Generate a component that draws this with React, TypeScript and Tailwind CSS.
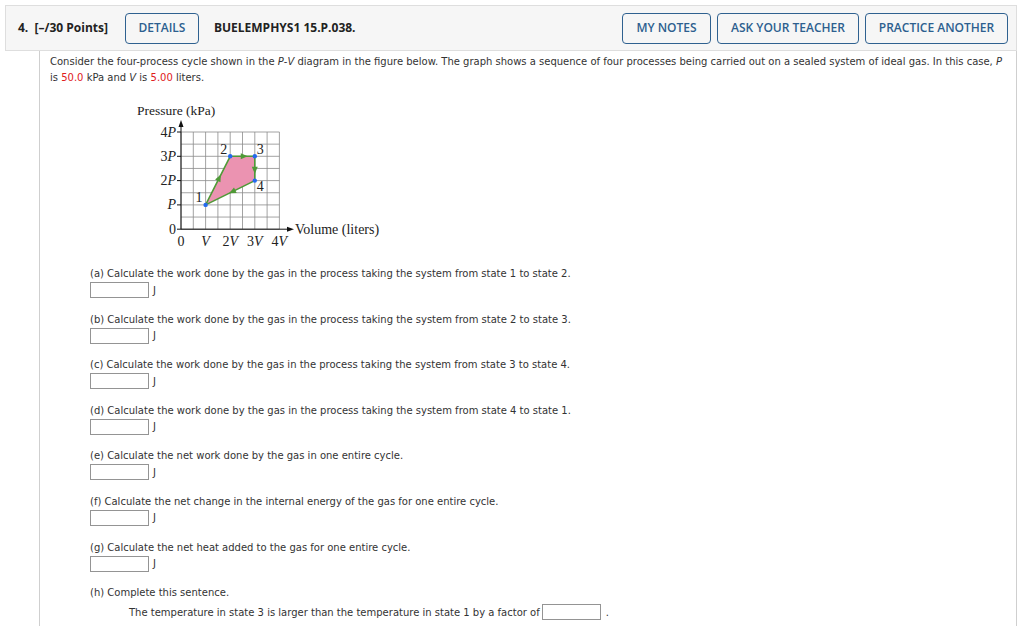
import React from 'react';

const body = { fontFamily: '"DejaVu Sans", Verdana, sans-serif' };
const head = { fontFamily: '"Open Sans", "Liberation Sans", sans-serif' };

function Btn({ label, w }: { label: string; w: string }) {
    return (
        <div
            className={`${w} h-[31px] flex items-center justify-center rounded-[4px] border border-[#2f6190] text-[#2d5f8f] text-[12px] font-semibold`}
        >
            {label}
        </div>
    );
}

function Box({ w = 'w-[59px]' }: { w?: string }) {
    return <span className={`inline-block ${w} h-[16px] border border-[#949494] bg-white align-middle`} />;
}

// P-V diagram
function Diagram() {
    const x0 = 51;
    const dx = 12.3;
    const y0 = 33;
    const dy = 12.15;
    const xs = Array.from({ length: 9 }, (_, i) => x0 + i * dx);
    const ys = Array.from({ length: 9 }, (_, j) => y0 + j * dy);
    const p1 = [x0 + 2 * dx, y0 + 6 * dy];
    const p2 = [x0 + 4 * dx, y0 + 2 * dy];
    const p3 = [x0 + 6 * dx, y0 + 2 * dy];
    const p4 = [x0 + 6 * dx, y0 + 4 * dy];
    const pts = [p1, p2, p3, p4];
    const green = '#4f9a37';

    const arrow = (a: number[], b: number[], t = 0.55) => {
        const mx = a[0] + (b[0] - a[0]) * t;
        const my = a[1] + (b[1] - a[1]) * t;
        const ang = (Math.atan2(b[1] - a[1], b[0] - a[0]) * 180) / Math.PI;
        return (
            <polygon
                key={`${mx}-${my}`}
                points="4,0 -3,-3 -3,3"
                fill={green}
                transform={`translate(${mx} ${my}) rotate(${ang})`}
            />
        );
    };

    const serif = { fontFamily: '"Liberation Serif", "Times New Roman", serif' };
    const yLabels = [
        { n: '4', y: ys[0] },
        { n: '3', y: ys[2] },
        { n: '2', y: ys[4] },
        { n: '', y: ys[6] },
    ];

    return (
        <svg width="260" height="156" viewBox="0 0 260 156" style={serif} className="block">
            <text x="7" y="16" fontSize="13.5" fill="#222">
                Pressure (kPa)
            </text>
            {xs.map((x) => (
                <line key={`v${x}`} x1={x} y1={y0} x2={x} y2={ys[8]} stroke="#8c8c8c" strokeWidth="0.8" />
            ))}
            {ys.map((y) => (
                <line key={`h${y}`} x1={x0} y1={y} x2={xs[8]} y2={y} stroke="#8c8c8c" strokeWidth="0.8" />
            ))}
            {/* axes */}
            <line x1={x0} y1={ys[8]} x2={x0} y2={25} stroke="#111" strokeWidth="1" />
            <polygon points={`${x0},21 ${x0 - 2.5},28 ${x0 + 2.5},28`} fill="#111" />
            <line x1={x0} y1={ys[8]} x2={160} y2={ys[8]} stroke="#111" strokeWidth="1" />
            <polygon points={`164,${ys[8]} 157,${ys[8] - 2.5} 157,${ys[8] + 2.5}`} fill="#111" />
            {[ys[0], ys[2], ys[4], ys[6], ys[8]].map((y) => (
                <line key={`t${y}`} x1={x0 - 4} y1={y} x2={x0} y2={y} stroke="#111" strokeWidth="1" />
            ))}
            {yLabels.map((l) => (
                <text key={l.y} x={x0 - 5} y={l.y + 4.5} fontSize="14" textAnchor="end" fill="#222">
                    {l.n}
                    <tspan fontStyle="italic">P</tspan>
                </text>
            ))}
            <text x={x0 - 5} y={ys[8] + 4.5} fontSize="14" textAnchor="end" fill="#222">
                0
            </text>
            <text x={x0} y="147" fontSize="14" textAnchor="middle" fill="#222">
                0
            </text>
            {['', '2', '3', '4'].map((n, i) => (
                <text key={i} x={xs[2 * (i + 1)]} y="147" fontSize="14" textAnchor="middle" fill="#222">
                    {n}
                    <tspan fontStyle="italic">V</tspan>
                </text>
            ))}
            <text x="165" y={ys[8] + 4.5} fontSize="14" fill="#222">
                Volume (liters)
            </text>
            {/* cycle */}
            <polygon
                points={pts.map((p) => p.join(',')).join(' ')}
                fill="#eb93b1"
                stroke={green}
                strokeWidth="1.6"
                strokeLinejoin="round"
            />
            {arrow(p1, p2)}
            {arrow(p2, p3)}
            {arrow(p3, p4)}
            {arrow(p4, p1, 0.45)}
            {pts.map((p) => (
                <circle key={p.join()} cx={p[0]} cy={p[1]} r="2.2" fill="#2469ee" />
            ))}
            <text x={p1[0] - 3} y={p1[1] - 3} fontSize="14" textAnchor="end" fill="#222">
                1
            </text>
            <text x={p2[0] - 3} y={p2[1] - 2} fontSize="14" textAnchor="end" fill="#222">
                2
            </text>
            <text x={p3[0] + 2} y={p3[1] - 2} fontSize="14" fill="#222">
                3
            </text>
            <text x={p4[0] + 2} y={p4[1] + 10} fontSize="14" fill="#222">
                4
            </text>
        </svg>
    );
}

const questions = [
    '(a) Calculate the work done by the gas in the process taking the system from state 1 to state 2.',
    '(b) Calculate the work done by the gas in the process taking the system from state 2 to state 3.',
    '(c) Calculate the work done by the gas in the process taking the system from state 3 to state 4.',
    '(d) Calculate the work done by the gas in the process taking the system from state 4 to state 1.',
    '(e) Calculate the net work done by the gas in one entire cycle.',
    '(f) Calculate the net change in the internal energy of the gas for one entire cycle.',
    '(g) Calculate the net heat added to the gas for one entire cycle.',
];

export default function App() {
    return (
        <div className="w-[1024px] h-[626px] overflow-hidden bg-white pt-[5px] pl-[5px] pr-[7px]">
            {/* header bar */}
            <div
                style={head}
                className="h-[46px] flex items-center border border-[#dedede] bg-[#f6f6f6] pl-[12px] pr-[8px] text-[#222]"
            >
                <span className="text-[12px] font-bold whitespace-pre">4.  [–/30 Points]</span>
                <div className="ml-[17px]">
                    <Btn label="DETAILS" w="w-[74px]" />
                </div>
                <span className="ml-[15px] text-[12px] font-bold">BUELEMPHYS1 15.P.038.</span>
                <div className="ml-auto flex gap-[6px]">
                    <Btn label="MY NOTES" w="w-[89px]" />
                    <Btn label="ASK YOUR TEACHER" w="w-[142px]" />
                    <Btn label="PRACTICE ANOTHER" w="w-[143px]" />
                </div>
            </div>

            {/* question body */}
            <div style={body} className="ml-[34px] border-l border-r border-[#cfcfcf] pl-[10px] pr-[10px] pt-[3px] h-[600px] text-[10px] text-[#333]">
                <p className="leading-[16px]">
                    Consider the four-process cycle shown in the <i>P</i>-<i>V</i> diagram in the figure below. The graph shows a
                    sequence of four processes being carried out on a sealed system of ideal gas. In this case, <i>P</i> is{' '}
                    <span className="text-[#e0201c]">50.0</span> kPa and <i>V</i> is <span className="text-[#e0201c]">5.00</span> liters.
                </p>

                <div className="ml-[80px] mt-[13px]">
                    <Diagram />
                </div>

                <div className="ml-[40px] mt-[11px]">
                    {questions.map((q) => (
                        <div key={q} className="h-[45.6px]">
                            <div className="leading-[16px]">{q}</div>
                            <div className="flex items-center gap-[4px] h-[16px]">
                                <Box />
                                <span>J</span>
                            </div>
                        </div>
                    ))}
                    <div className="leading-[16px]">(h) Complete this sentence.</div>
                    <div className="ml-[39px] mt-[3px] flex items-center h-[16px]">
                        <span>The temperature in state 3 is larger than the temperature in state 1 by a factor of</span>
                        <span className="ml-[2px]">
                            <Box />
                        </span>
                        <span className="ml-[5px]">.</span>
                    </div>
                </div>
            </div>
        </div>
    );
}
